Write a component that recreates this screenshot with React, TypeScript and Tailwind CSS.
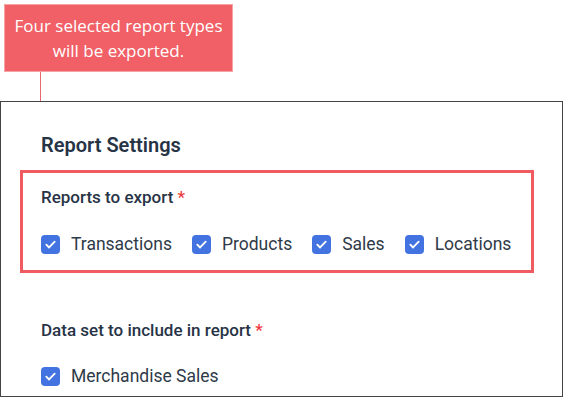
import React from "react";

const Check: React.FC = () => (
  <span className="flex h-[19px] w-[19px] shrink-0 items-center justify-center rounded-[4px] bg-[#4273e0]">
    <svg width="13" height="13" viewBox="0 0 14 14" fill="none">
      <path d="M2.5 7.2l3 3 6-6.2" stroke="#fff" strokeWidth="2" strokeLinecap="round" strokeLinejoin="round" />
    </svg>
  </span>
);

const Option: React.FC<{ label: string }> = ({ label }) => (
  <label className="flex h-[24px] items-center gap-[11px]">
    <Check />
    <span className="text-[17.5px] leading-[24px] text-[#2f3a48]">{label}</span>
  </label>
);

const Required: React.FC<{ text: string }> = ({ text }) => (
  <div className="text-[17px] font-medium leading-[24px] text-[#283446]">
    {text} <span className="text-[#f0383c]">*</span>
  </div>
);

export default function App() {
  return (
    <div className="h-[398px] w-[564px] overflow-hidden bg-white font-['Roboto',sans-serif]">
      <div className="ml-[4px] mt-[4px] h-[68px] w-[229px] border border-[#f7a3a5] bg-[#f06066] pt-[8px] text-center font-['Open_Sans',sans-serif] text-[17px] leading-[25px] text-white">
        Four selected report types
        <br />
        will be exported.
      </div>
      <div className="ml-[40px] h-[29px] w-px bg-[#e66a6e]" />
      <div className="h-[296px] w-[563px] border border-[#444]">
        <div className="px-[19px]">
          <h2 className="mt-[31px] pl-[21px] text-[20px] font-semibold leading-[24px] text-[#263445]">
            Report Settings
          </h2>
          <div className="mt-[13px] h-[103px] w-[514px] border-[3px] border-[#ef5b60] pl-[18px] pt-[12px]">
            <Required text="Reports to export" />
            <div className="mt-[23px] flex gap-[20px]">
              <Option label="Transactions" />
              <Option label="Products" />
              <Option label="Sales" />
              <Option label="Locations" />
            </div>
          </div>
          <div className="mt-[45px] pl-[21px]">
            <Required text="Data set to include in report" />
            <div className="mt-[22px]">
              <Option label="Merchandise Sales" />
            </div>
          </div>
        </div>
      </div>
    </div>
  );
}
